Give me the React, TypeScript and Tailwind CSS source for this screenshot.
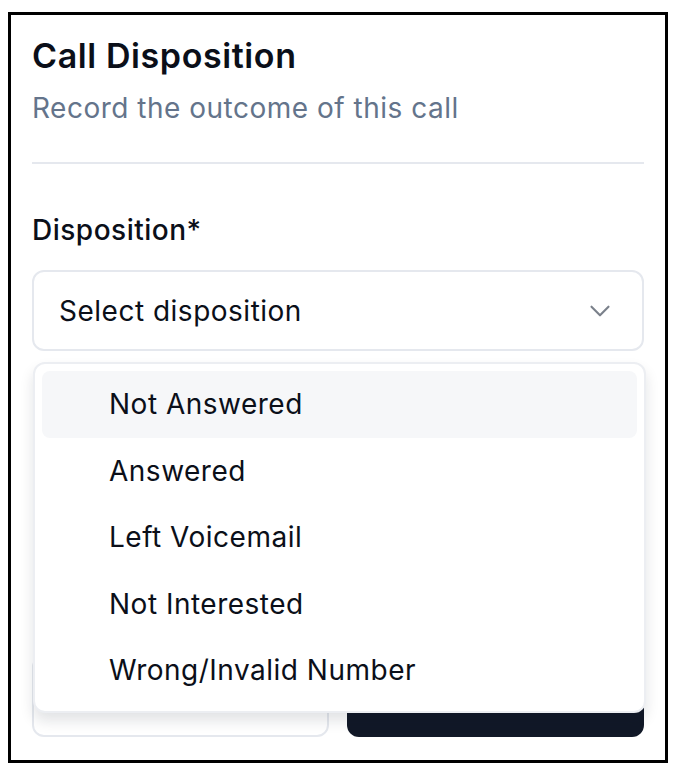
import React from 'react';

// ─── Call disposition card with the select menu opened ───────────────────────
const options = ['Not Answered', 'Answered', 'Left Voicemail', 'Not Interested', 'Wrong/Invalid Number'];

function Chevron() {
  return (
    <svg width="34" height="34" viewBox="0 0 24 24" fill="none" stroke="#7b818b" strokeWidth="1.5" strokeLinecap="round" strokeLinejoin="round">
      <path d="m6 9 6 6 6-6" />
    </svg>
  );
}

export default function App() {
  return (
    <div className="w-[680px] h-[765px] bg-white pt-[12px] pl-[8px]" style={{ fontFamily: 'Inter, "Noto Sans", sans-serif' }}>
      <div className="relative w-[660px] h-[751px] border-[3px] border-black bg-white px-[21px] pt-[21px]">
        {/* Header */}
        <h1 className="text-[34px] leading-[40px] font-semibold text-[#0b0f19] tracking-[0.6px]">Call Disposition</h1>
        <p className="mt-[14px] text-[28px] leading-[36px] tracking-[0.5px] text-[#64748b]">Record the outcome of this call</p>
        <div className="mt-[36px] h-[2px] bg-[#e5e8ee]" />

        {/* Field */}
        <label className="block mt-[48px] text-[28px] leading-[36px] tracking-[0.5px] font-medium text-[#0b0f19]">Disposition*</label>
        <div className="mt-[22px] h-[81px] rounded-[12px] border-2 border-[#e5e8ee] flex items-center justify-between pl-[25px] pr-[25px]">
          <span className="text-[28px] tracking-[0.5px] text-[#0b0f19]">Select disposition</span>
          <Chevron />
        </div>

        {/* Actions (partly hidden under the open menu) */}
        <div className="mt-[304px] grid grid-cols-2 gap-[18px]">
          <div className="h-[82px] rounded-[12px] border-2 border-[#e5e8ee] bg-white" />
          <div className="h-[82px] rounded-[12px] bg-[#111827]" />
        </div>

        {/* Open menu */}
        <div className="absolute left-[22px] top-[347px] w-[613px] rounded-[12px] border-2 border-[#eceef2] bg-white p-[7px] shadow-[0_8px_14px_rgba(15,23,42,0.12)]">
          {options.map((o, i) => (
            <div
              key={o}
              className={`h-[66.5px] flex items-center pl-[67px] rounded-[8px] text-[28px] tracking-[0.5px] text-[#0b0f19] ${i === 0 ? 'bg-[#f6f7f9]' : ''}`}
            >
              {o}
            </div>
          ))}
        </div>
      </div>
    </div>
  );
}
